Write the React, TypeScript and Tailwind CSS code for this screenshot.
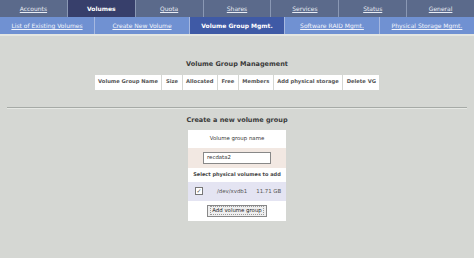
import React from "react";

const top = ["Accounts", "Volumes", "Quota", "Shares", "Services", "Status", "General"];
const sub = ["List of Existing Volumes", "Create New Volume", "Volume Group Mgmt.", "Software RAID Mgmt.", "Physical Storage Mgmt."];
const cols = ["Volume Group Name", "Size", "Allocated", "Free", "Members", "Add physical storage", "Delete VG"];

export default function App() {
  return (
    <div className="w-[474px] h-[258px] bg-[#d5d7d3] flex flex-col overflow-hidden" style={{ fontFamily: '"DejaVu Sans", Verdana, sans-serif' }}>
      <div className="flex h-[17px] bg-[#8a98b4] gap-[1px]">
        {top.map((t) => (
          <div
            key={t}
            className={
              "flex-1 flex items-center justify-center text-[6px] " +
              (t === "Volumes" ? "bg-[#373f6b] text-white font-bold" : "bg-[#5b6a8b] text-[#e8ecf4] underline")
            }
          >
            {t}
          </div>
        ))}
      </div>
      <div className="flex h-[17px] bg-[#a6b8e0] gap-[1px]">
        {sub.map((t) => (
          <div
            key={t}
            className={
              "flex-1 flex items-center justify-center text-[6px] " +
              (t === "Volume Group Mgmt." ? "bg-[#3f5aa6] text-white font-bold" : "bg-[#7091d2] text-[#f2f5fc] underline")
            }
          >
            {t}
          </div>
        ))}
      </div>
      <div className="h-[2px] bg-[#e4e6e2]" />
      <div className="flex-1 flex flex-col items-center">
        <div className="mt-[24px] text-[6.5px] font-bold text-[#3a3a3a]">Volume Group Management</div>
        <table className="mt-[4px] border-separate border-spacing-[1.5px] text-[5.2px] font-bold text-[#555]">
          <tbody>
            <tr>
              {cols.map((c) => (
                <td key={c} className="bg-white h-[15px] px-[3.5px] whitespace-nowrap">{c}</td>
              ))}
            </tr>
          </tbody>
        </table>
        <div className="mt-[16px] w-[460px] h-[2px] bg-[#a6aaa6] border-b border-[#e6e8e4]" />
        <div className="mt-[7px] text-[6.5px] font-bold text-[#3a3a3a]">Create a new volume group</div>
        <div className="mt-[4px] w-[98px] bg-white text-[5.4px] text-[#333] flex flex-col">
          <div className="h-[18px] flex items-center justify-center">Volume group name</div>
          <div className="h-[20px] bg-[#f2e8e2] flex items-center justify-center">
            <div className="w-[68px] h-[12px] bg-white border border-[#888] flex items-center px-[3px] text-[5.4px]">recdata2</div>
          </div>
          <div className="h-[14px] flex items-center justify-center font-bold text-[#444] text-[5px] whitespace-nowrap">Select physical volumes to add</div>
          <div className="h-[19px] bg-[#e4e4f2] flex items-center text-[#555]">
            <div className="ml-[7px] w-[8px] h-[8px] bg-white border border-[#777] flex items-center justify-center text-[6px] leading-none">✓</div>
            <div className="ml-[14px]">/dev/xvdb1</div>
            <div className="ml-[9px]">11.71 GB</div>
          </div>
          <div className="h-[20px] flex items-center justify-center">
            <div className="px-[2px] h-[12px] border border-[#888] bg-[#efefef] flex items-center">
              <div className="border border-dotted border-[#999] px-[1px] text-[5.4px] text-[#222] leading-[7px]">Add volume group</div>
            </div>
          </div>
        </div>
      </div>
    </div>
  );
}
